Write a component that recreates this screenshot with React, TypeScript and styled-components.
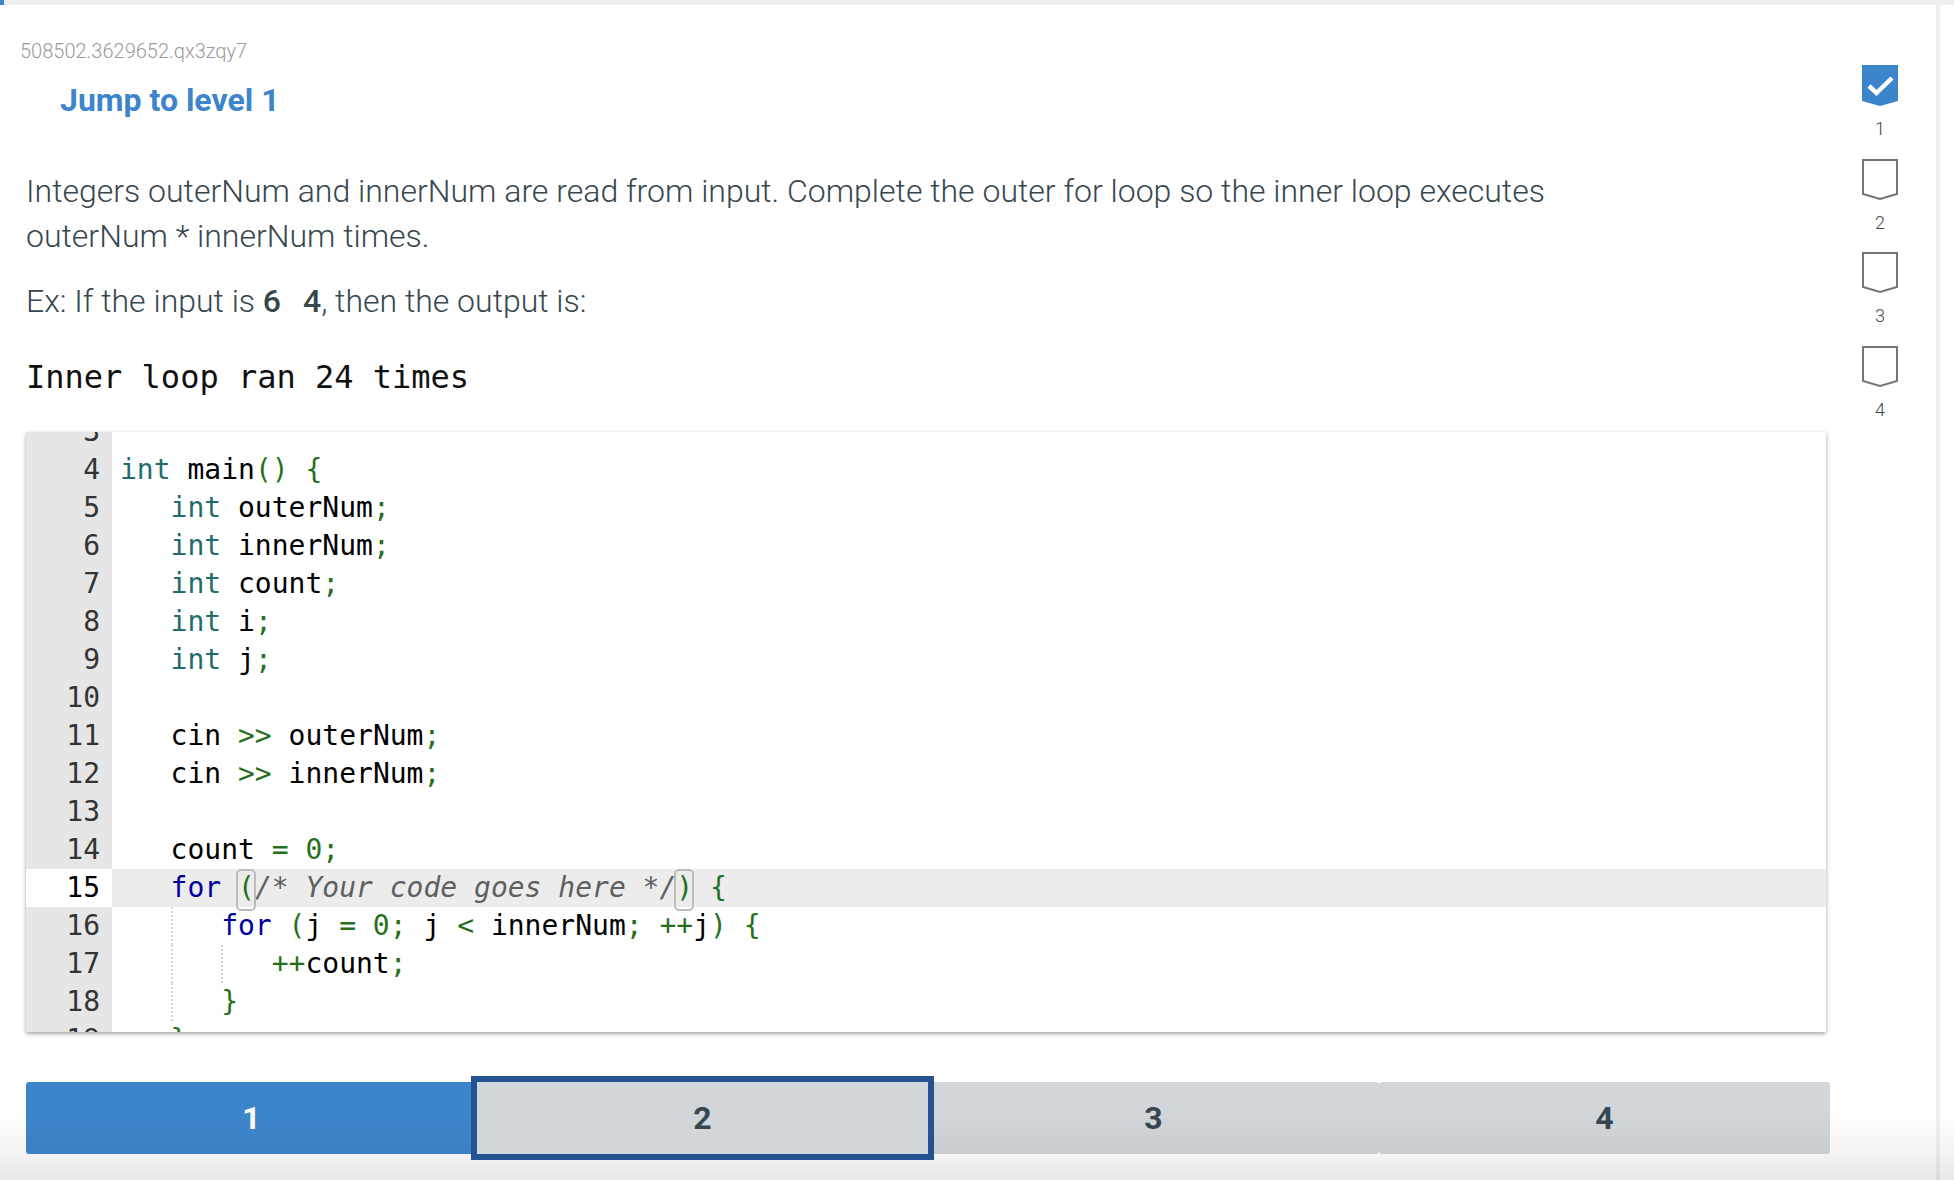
import React from 'react';
import styled, { createGlobalStyle } from 'styled-components';

const Global = createGlobalStyle`
  html, body { margin: 0; padding: 0; background: #fff; }
  #root { height: 1180px; overflow: hidden; }
`;

const Page = styled.div`
  position: relative;
  width: 1954px;
  height: 1180px;
  overflow: hidden;
  background: #fff;
  font-family: Roboto, "Liberation Sans", sans-serif;
`;
const TopBar = styled.div`
  height: 5px;
  background: #eeeeee;
`;
const TopProgress = styled.div`
  width: 4px;
  height: 5px;
  background: #3d85cb;
`;
const Frame = styled.div`
  display: flex;
  width: 1936px;
  height: 1175px;
  border-right: 4px solid #f0f0f0;
`;
const Main = styled.main`
  width: 1830px;
  flex: none;
  box-sizing: border-box;
  padding: 34px 0 0 26px;
`;
const ActivityId = styled.div`
  margin-left: -6px;
  font-size: 20px;
  line-height: 24px;
  font-weight: 300;
  color: #9a9a9a;
`;
const Jump = styled.div`
  margin: 14px 0 0 34px;
  font-size: 32px;
  line-height: 46px;
  font-weight: 700;
  color: #3d85cb;
`;
const Para = styled.p`
  margin: 0;
  font-size: 32px;
  line-height: 45px;
  font-weight: 300;
  color: #37474f;
`;
const Intro = styled(Para)`
  margin-top: 46px;
  width: 1560px;
`;
const Example = styled(Para)`
  margin-top: 20px;
`;
const InlineCode = styled.span`
  font-weight: 500;
  word-spacing: 3px;
  white-space: pre;
`;
const Output = styled.pre`
  margin: 34px 0 0;
  font-family: "DejaVu Sans Mono", monospace;
  font-size: 32px;
  line-height: 38px;
  color: #111;
`;
const Editor = styled.div`
  margin-top: 36px;
  width: 1800px;
  height: 600px;
  overflow: hidden;
  background: #fff;
  box-shadow: 0 2px 4px rgba(0, 0, 0, 0.32), 0 0 5px rgba(0, 0, 0, 0.05);
  font-family: "DejaVu Sans Mono", monospace;
  font-size: 28px;
  line-height: 38px;
`;
const Lines = styled.div`
  margin-top: -19px;
`;
const Line = styled.div<{ $active?: boolean }>`
  display: flex;
  height: 38px;
  background: ${(p) => (p.$active ? '#ececec' : '#fff')};
`;
const Gutter = styled.div<{ $active?: boolean }>`
  flex: none;
  width: 86px;
  box-sizing: border-box;
  padding-right: 12px;
  text-align: right;
  background: ${(p) => (p.$active ? '#fff' : '#e6e6e6')};
  color: ${(p) => (p.$active ? '#000' : '#333')};
`;
const Code = styled.div`
  position: relative;
  padding-left: 8px;
  white-space: pre;
  color: #000;
`;
const Guide = styled.span<{ $col: number }>`
  position: absolute;
  top: 0;
  bottom: 0;
  left: ${(p) => 8 + p.$col * 16.86}px;
  border-left: 2px dotted #d6d6d6;
`;
const colors: Record<string, string> = {
  t: '#1f6b6e',
  k: '#0000a0',
  p: '#26701c',
  c: '#5f5f5f',
  n: '#000000',
};
const Tok = styled.span<{ $k: string }>`
  color: ${(p) => colors[p.$k]};
  font-style: ${(p) => (p.$k === 'c' ? 'italic' : 'normal')};
`;
const Bracket = styled.span`
  position: relative;
  color: #26701c;
  &::after {
    content: '';
    position: absolute;
    left: -2px;
    right: -1px;
    top: -2px;
    height: 38px;
    border: 2px solid #bbbbbb;
    border-radius: 5px;
  }
`;
const Levels = styled.div`
  display: flex;
  margin-top: 50px;
  width: 1804px;
  height: 72px;
`;
const Level = styled.button<{ $state?: 'done' | 'focus' }>`
  flex: 1;
  position: relative;
  border: none;
  padding: 0;
  border-radius: 3px;
  background: ${(p) => (p.$state === 'done' ? '#3d85cb' : '#d0d6da')};
  color: ${(p) => (p.$state === 'done' ? '#fff' : '#37474f')};
  font-family: Roboto, sans-serif;
  font-size: 32px;
  font-weight: 700;
  ${(p) => (p.$state === 'focus' ? 'outline: 6px solid #235390; z-index: 1; border-radius: 0;' : '')}
`;
const Side = styled.aside`
  width: 100px;
  flex: none;
  padding-top: 60px;
`;
const SideItem = styled.div`
  display: flex;
  flex-direction: column;
  align-items: center;
  height: 93.5px;
`;
const SideNum = styled.div`
  margin-top: 12px;
  font-size: 18px;
  line-height: 22px;
  font-weight: 300;
  color: #37474f;
`;
const BottomFade = styled.div`
  position: absolute;
  left: 0;
  right: 0;
  bottom: 0;
  height: 66px;
  pointer-events: none;
  background: linear-gradient(
    to bottom,
    rgba(0, 0, 0, 0),
    rgba(0, 0, 0, 0.04) 55%,
    rgba(0, 0, 0, 0.09)
  );
`;

type T = [string, string];
const rows: { n: number; toks: T[]; guides?: number[] }[] = [
  { n: 3, toks: [] },
  { n: 4, toks: [['t', 'int'], ['n', ' main'], ['p', '() {']] },
  { n: 5, toks: [['n', '   '], ['t', 'int'], ['n', ' outerNum'], ['p', ';']] },
  { n: 6, toks: [['n', '   '], ['t', 'int'], ['n', ' innerNum'], ['p', ';']] },
  { n: 7, toks: [['n', '   '], ['t', 'int'], ['n', ' count'], ['p', ';']] },
  { n: 8, toks: [['n', '   '], ['t', 'int'], ['n', ' i'], ['p', ';']] },
  { n: 9, toks: [['n', '   '], ['t', 'int'], ['n', ' j'], ['p', ';']] },
  { n: 10, toks: [] },
  { n: 11, toks: [['n', '   cin '], ['p', '>>'], ['n', ' outerNum'], ['p', ';']] },
  { n: 12, toks: [['n', '   cin '], ['p', '>>'], ['n', ' innerNum'], ['p', ';']] },
  { n: 13, toks: [] },
  { n: 14, toks: [['n', '   count '], ['p', '= 0;']] },
  { n: 15, toks: [] },
  {
    n: 16,
    guides: [3],
    toks: [['k', '      for'], ['p', ' ('], ['n', 'j '], ['p', '= 0;'], ['n', ' j '], ['p', '<'], ['n', ' innerNum'], ['p', '; ++'], ['n', 'j'], ['p', ') {']],
  },
  { n: 17, guides: [3, 6], toks: [['n', '         '], ['p', '++'], ['n', 'count'], ['p', ';']] },
  { n: 18, guides: [3], toks: [['p', '      }']] },
  { n: 19, toks: [['p', '   }']] },
];

const Badge = ({ done }: { done?: boolean }) => (
  <svg width="36" height="41" viewBox="0 0 36 41" aria-hidden="true">
    {done ? (
      <>
        <path d="M0 0H36V36L18 41L0 36Z" fill="#3d85cb" />
        <path d="M7 21L14.5 28L30 13" fill="none" stroke="#fff" strokeWidth="4.5" />
      </>
    ) : (
      <path d="M1 1H35V35L18 40L1 35Z" fill="#fff" stroke="#757575" strokeWidth="2" />
    )}
  </svg>
);

export default function App() {
  return (
    <Page>
      <Global />
      <TopBar>
        <TopProgress />
      </TopBar>
      <Frame>
        <Main>
          <ActivityId>508502.3629652.qx3zqy7</ActivityId>
          <Jump>Jump to level 1</Jump>
          <Intro>
            Integers outerNum and innerNum are read from input. Complete the outer for loop so the inner loop executes
            outerNum * innerNum times.
          </Intro>
          <Example>
            Ex: If the input is <InlineCode>6  4</InlineCode>, then the output is:
          </Example>
          <Output>Inner loop ran 24 times</Output>
          <Editor>
            <Lines>
              {rows.map((r) =>
                r.n === 15 ? (
                  <Line key={r.n} $active>
                    <Gutter $active>{r.n}</Gutter>
                    <Code>
                      <Tok $k="k">{'   for'}</Tok> <Bracket>(</Bracket>
                      <Tok $k="c">/* Your code goes here */</Tok>
                      <Bracket>)</Bracket>
                      <Tok $k="p"> {'{'}</Tok>
                    </Code>
                  </Line>
                ) : (
                  <Line key={r.n}>
                    <Gutter>{r.n}</Gutter>
                    <Code>
                      {r.guides?.map((g) => <Guide key={g} $col={g} />)}
                      {r.toks.map((t, i) => (
                        <Tok key={i} $k={t[0]}>
                          {t[1]}
                        </Tok>
                      ))}
                    </Code>
                  </Line>
                ),
              )}
            </Lines>
          </Editor>
          <Levels>
            <Level $state="done">1</Level>
            <Level $state="focus">2</Level>
            <Level>3</Level>
            <Level>4</Level>
          </Levels>
        </Main>
        <Side>
          {[1, 2, 3, 4].map((n) => (
            <SideItem key={n}>
              <Badge done={n === 1} />
              <SideNum>{n}</SideNum>
            </SideItem>
          ))}
        </Side>
      </Frame>
      <BottomFade />
    </Page>
  );
}
